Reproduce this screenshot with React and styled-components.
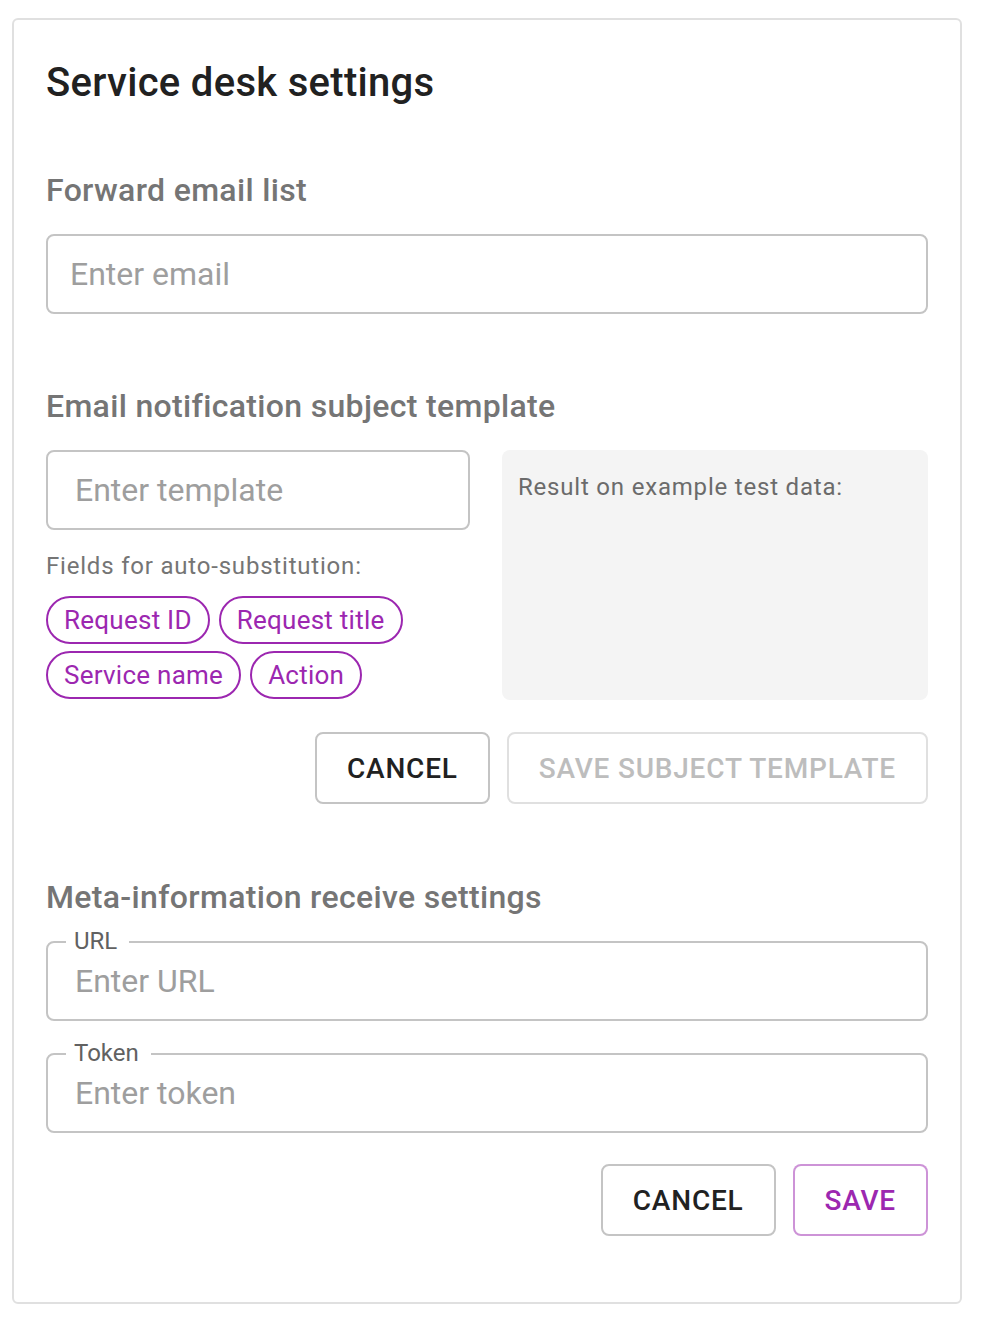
import React from 'react'
import styled, { createGlobalStyle } from 'styled-components'

const GlobalStyle = createGlobalStyle`
  body {
    margin: 0;
    background: #fff;
    font-family: Roboto, "Liberation Sans", sans-serif;
    -webkit-font-smoothing: antialiased;
  }
`

const Card = styled.div`
  box-sizing: border-box;
  margin: 18px 20px 0 12px;
  width: 950px;
  height: 1286px;
  border: 2px solid #e0e0e0;
  border-radius: 6px;
  padding: 39px 32px 0 32px;
  display: flex;
  flex-direction: column;
`

const Title = styled.h1`
  margin: 0;
  font-size: 40px;
  line-height: 48px;
  font-weight: 500;
  letter-spacing: 0.3px;
  color: #212121;
`

const SectionTitle = styled.h2`
  margin: ${props => props.top}px 0 24px;
  font-size: 32px;
  line-height: 40px;
  font-weight: 500;
  letter-spacing: 0.33px;
  color: #757575;
`

const TextInput = styled.input`
  box-sizing: border-box;
  width: 100%;
  height: 80px;
  border: 2px solid #c4c4c4;
  border-radius: 8px;
  padding: 0 ${props => props.pad || 27}px;
  font-family: inherit;
  font-size: 32px;
  color: #212121;
  outline: none;
  background: transparent;

  &::placeholder {
    color: #9e9e9e;
  }
`

const TemplateRow = styled.div`
  display: grid;
  grid-template-columns: 424px 426px;
  column-gap: 32px;
`

const LeftColumn = styled.div`
  display: flex;
  flex-direction: column;
`

const Hint = styled.div`
  margin: 20px 0 14px;
  font-size: 24px;
  line-height: 32px;
  letter-spacing: 0.8px;
  color: #757575;
`

const Chips = styled.div`
  display: flex;
  flex-wrap: wrap;
  gap: 7px 9px;
`

const Chip = styled.span`
  box-sizing: border-box;
  height: 48px;
  display: inline-flex;
  align-items: center;
  padding: 0 16px;
  border: 2px solid #9c27b0;
  border-radius: 24px;
  font-size: 26px;
  letter-spacing: 0.25px;
  color: #9c27b0;
  cursor: pointer;
`

const ResultBox = styled.div`
  box-sizing: border-box;
  height: 250px;
  background: #f4f4f4;
  border-radius: 8px;
  padding: 21px 16px;
  font-size: 24px;
  line-height: 32px;
  letter-spacing: 0.8px;
  color: #6b6b6b;
`

const Actions = styled.div`
  display: flex;
  justify-content: flex-end;
  gap: 17px;
  margin-top: ${props => props.top}px;
`

const Button = styled.button`
  box-sizing: border-box;
  height: 72px;
  padding: 0 30px;
  border-radius: 8px;
  background: #fff;
  font-family: inherit;
  font-size: 28px;
  font-weight: 500;
  letter-spacing: 0.8px;
  text-transform: uppercase;
  border: 2px solid ${props => props.primary ? 'rgba(156, 39, 176, 0.5)' : props.disabled ? '#e0e0e0' : '#c4c4c4'};
  color: ${props => props.primary ? '#9c27b0' : props.disabled ? '#bdbdbd' : '#212121'};
  cursor: ${props => props.disabled ? 'default' : 'pointer'};
`

const Field = styled.div`
  position: relative;
  margin-top: ${props => props.top}px;
`

const FieldLabel = styled.label`
  position: absolute;
  left: 20px;
  top: -15px;
  padding: 0 12px 0 8px;
  background: #fff;
  font-size: 24px;
  line-height: 30px;
  color: #616161;
`

const chips = ['Request ID', 'Request title', 'Service name', 'Action']

export default function App () {
  return (
    <>
      <GlobalStyle />
      <Card>
        <Title>Service desk settings</Title>

        <SectionTitle top={63}>Forward email list</SectionTitle>
        <TextInput placeholder='Enter email' pad={22} />

        <SectionTitle top={72}>Email notification subject template</SectionTitle>
        <TemplateRow>
          <LeftColumn>
            <TextInput placeholder='Enter template' />
            <Hint>Fields for auto-substitution:</Hint>
            <Chips>
              {chips.map(chip => <Chip key={chip}>{chip}</Chip>)}
            </Chips>
          </LeftColumn>
          <ResultBox>Result on example test data:</ResultBox>
        </TemplateRow>
        <Actions top={32}>
          <Button>Cancel</Button>
          <Button disabled>Save subject template</Button>
        </Actions>

        <SectionTitle top={73}>Meta-information receive settings</SectionTitle>
        <Field top={0}>
          <FieldLabel>URL</FieldLabel>
          <TextInput placeholder='Enter URL' />
        </Field>
        <Field top={32}>
          <FieldLabel>Token</FieldLabel>
          <TextInput placeholder='Enter token' />
        </Field>
        <Actions top={31}>
          <Button>Cancel</Button>
          <Button primary>Save</Button>
        </Actions>
      </Card>
    </>
  )
}
